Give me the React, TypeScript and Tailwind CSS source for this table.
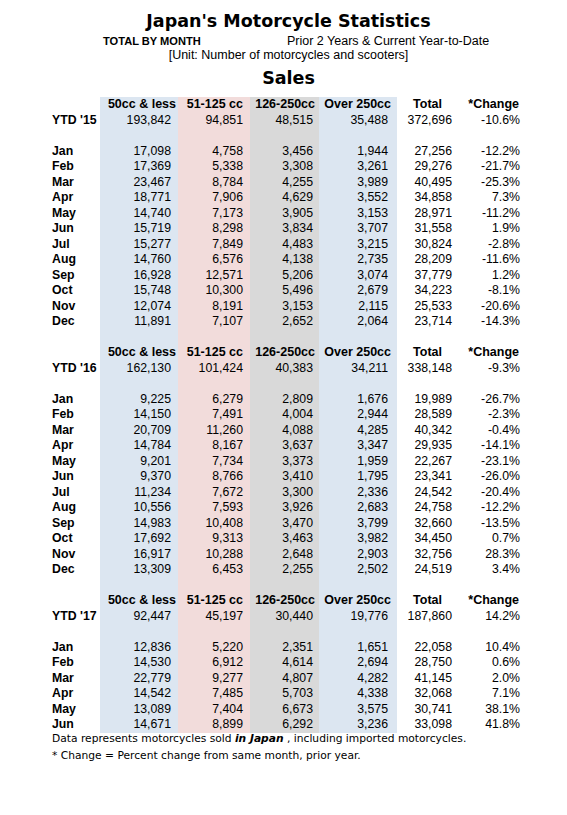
import React from "react";

type Row = [string, string, string, string, string, string, string];

const s1: Row[] = [
  ["Jan", "17,098", "4,758", "3,456", "1,944", "27,256", "-12.2%"],
  ["Feb", "17,369", "5,338", "3,308", "3,261", "29,276", "-21.7%"],
  ["Mar", "23,467", "8,784", "4,255", "3,989", "40,495", "-25.3%"],
  ["Apr", "18,771", "7,906", "4,629", "3,552", "34,858", "7.3%"],
  ["May", "14,740", "7,173", "3,905", "3,153", "28,971", "-11.2%"],
  ["Jun", "15,719", "8,298", "3,834", "3,707", "31,558", "1.9%"],
  ["Jul", "15,277", "7,849", "4,483", "3,215", "30,824", "-2.8%"],
  ["Aug", "14,760", "6,576", "4,138", "2,735", "28,209", "-11.6%"],
  ["Sep", "16,928", "12,571", "5,206", "3,074", "37,779", "1.2%"],
  ["Oct", "15,748", "10,300", "5,496", "2,679", "34,223", "-8.1%"],
  ["Nov", "12,074", "8,191", "3,153", "2,115", "25,533", "-20.6%"],
  ["Dec", "11,891", "7,107", "2,652", "2,064", "23,714", "-14.3%"],
];
const s2: Row[] = [
  ["Jan", "9,225", "6,279", "2,809", "1,676", "19,989", "-26.7%"],
  ["Feb", "14,150", "7,491", "4,004", "2,944", "28,589", "-2.3%"],
  ["Mar", "20,709", "11,260", "4,088", "4,285", "40,342", "-0.4%"],
  ["Apr", "14,784", "8,167", "3,637", "3,347", "29,935", "-14.1%"],
  ["May", "9,201", "7,734", "3,373", "1,959", "22,267", "-23.1%"],
  ["Jun", "9,370", "8,766", "3,410", "1,795", "23,341", "-26.0%"],
  ["Jul", "11,234", "7,672", "3,300", "2,336", "24,542", "-20.4%"],
  ["Aug", "10,556", "7,593", "3,926", "2,683", "24,758", "-12.2%"],
  ["Sep", "14,983", "10,408", "3,470", "3,799", "32,660", "-13.5%"],
  ["Oct", "17,692", "9,313", "3,463", "3,982", "34,450", "0.7%"],
  ["Nov", "16,917", "10,288", "2,648", "2,903", "32,756", "28.3%"],
  ["Dec", "13,309", "6,453", "2,255", "2,502", "24,519", "3.4%"],
];
const s3: Row[] = [
  ["Jan", "12,836", "5,220", "2,351", "1,651", "22,058", "10.4%"],
  ["Feb", "14,530", "6,912", "4,614", "2,694", "28,750", "0.6%"],
  ["Mar", "22,779", "9,277", "4,807", "4,282", "41,145", "2.0%"],
  ["Apr", "14,542", "7,485", "5,703", "4,338", "32,068", "7.1%"],
  ["May", "13,089", "7,404", "6,673", "3,575", "30,741", "38.1%"],
  ["Jun", "14,671", "8,899", "6,292", "3,236", "33,098", "41.8%"],
];

const sections: { ytd: Row; rows: Row[] }[] = [
  { ytd: ["YTD '15", "193,842", "94,851", "48,515", "35,488", "372,696", "-10.6%"], rows: s1 },
  { ytd: ["YTD '16", "162,130", "101,424", "40,383", "34,211", "338,148", "-9.3%"], rows: s2 },
  { ytd: ["YTD '17", "92,447", "45,197", "30,440", "19,776", "187,860", "14.2%"], rows: s3 },
];

const rowCls = "grid grid-cols-[48px_78px_72px_69px_78px_61px_66px] h-[15.5px] leading-[15.5px]";
const c1 = "bg-[#dce6f1]";
const c2 = "bg-[#f2dcdb]";
const c3 = "bg-[#d9d9d9]";
const c4 = "bg-[#dce6f1]";

function HeaderRow() {
  return (
    <div className={rowCls + " font-bold text-[12.5px]"}>
      <div />
      <div className={c1 + " text-right pr-[2px] whitespace-nowrap"}>50cc &amp; less</div>
      <div className={c2 + " text-right pr-[7px] whitespace-nowrap"}>51-125 cc</div>
      <div className={c3 + " text-right pr-[4px] whitespace-nowrap"}>126-250cc</div>
      <div className={c4 + " text-right pr-[6px] whitespace-nowrap"}>Over 250cc</div>
      <div className="text-right pr-[16px]">Total</div>
      <div className="text-right pr-[5px] whitespace-nowrap">*Change</div>
    </div>
  );
}

function DataRow({ r }: { r: Row }) {
  return (
    <div className={rowCls + " text-[12.3px]"}>
      <div className="font-bold whitespace-nowrap">{r[0]}</div>
      <div className={c1 + " text-right pr-[7px]"}>{r[1]}</div>
      <div className={c2 + " text-right pr-[7px]"}>{r[2]}</div>
      <div className={c3 + " text-right pr-[6px]"}>{r[3]}</div>
      <div className={c4 + " text-right pr-[9px]"}>{r[4]}</div>
      <div className="text-right pr-[6px]">{r[5]}</div>
      <div className="text-right pr-[4px]">{r[6]}</div>
    </div>
  );
}

function BlankRow() {
  return (
    <div className={rowCls}>
      <div />
      <div className={c1} />
      <div className={c2} />
      <div className={c3} />
      <div className={c4} />
      <div />
      <div />
    </div>
  );
}

export default function App() {
  return (
    <div className="w-[567px] h-[815px] bg-white text-black font-['Liberation_Sans',Arial,sans-serif]">
      <div className="pt-[10px] pl-[10px] text-center font-['DejaVu_Sans',Verdana,sans-serif] font-bold text-[17.5px] leading-[22px]">
        Japan's Motorcycle Statistics
      </div>
      <div className="mt-[2px] flex h-[14px] leading-[14px] text-[12.5px] pl-[103px]">
        <span className="w-[184px] font-bold text-[11.1px]">TOTAL BY MONTH</span>
        <span>Prior 2 Years &amp; Current Year-to-Date</span>
      </div>
      <div className="h-[14px] leading-[14px] text-[12.5px] text-center pl-[10px]">
        [Unit: Number of motorcycles and scooters]
      </div>
      <div className="mt-[5px] pl-[10px] text-center font-['DejaVu_Sans',Verdana,sans-serif] font-bold text-[17.5px] leading-[22px]">
        Sales
      </div>
      <div className="mt-[8px] pl-[52px]">
        {sections.map((s, i) => (
          <React.Fragment key={i}>
            {i > 0 && <BlankRow />}
            <HeaderRow />
            <DataRow r={s.ytd} />
            <BlankRow />
            {s.rows.map((r, j) => (
              <DataRow key={j} r={r} />
            ))}
          </React.Fragment>
        ))}
        <div className="-mt-[1px] font-['DejaVu_Sans',Verdana,sans-serif] text-[10.7px] leading-[14px] whitespace-nowrap">
          Data represents motorcycles sold <b className="italic">in Japan</b> , including imported motorcycles.
        </div>
        <div className="mt-[3px] font-['DejaVu_Sans',Verdana,sans-serif] text-[10.7px] leading-[14px] whitespace-nowrap">
          * Change = Percent change from same month, prior year.
        </div>
      </div>
    </div>
  );
}
